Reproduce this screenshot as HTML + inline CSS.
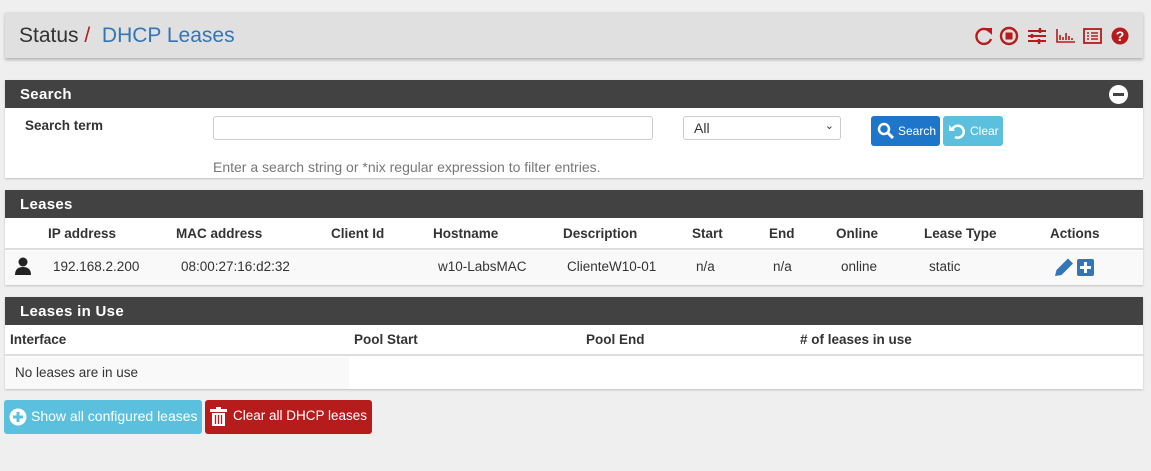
<!DOCTYPE html>
<html><head><style>
*{box-sizing:border-box;margin:0;padding:0}
body{width:1151px;height:471px;background:#efefef;font-family:"Liberation Sans",sans-serif;font-size:13.5px;color:#333;position:relative;overflow:hidden}
.abs{position:absolute}
.hdr{left:5px;top:12px;width:1138px;height:46px;background:#e0e0e0;box-shadow:0 2px 3px rgba(0,0,0,.25)}
.hdr .t{position:absolute;left:14px;top:12px;font-size:21px;color:#333}
.hdr .t span{color:#b71c1c}.hdr .t b{font-weight:normal;color:#3376b7}
.panel{left:5px;width:1138px;background:#fff;box-shadow:0 1px 2px rgba(0,0,0,.2)}
.ph{height:28px;background:#424242;color:#fff;font-weight:bold;font-size:15px;padding:6px 15px;letter-spacing:.3px}
.th{font-weight:bold;position:absolute;font-size:13.5px}
.td{position:absolute;font-size:13.5px}
</style></head><body>
<div class="abs hdr"><div class="t">Status<span> / </span>&nbsp;<b>DHCP Leases</b></div>
<svg class="abs" style="left:967px;top:13px" width="160" height="22" viewBox="0 0 160 22" fill="none" stroke="#b71c1c" stroke-width="2.4">
<path d="M18 7A7.5 7.5 0 1 0 19 14"/><path d="M13 3l7 0 0 7z" fill="#b71c1c" stroke="none"/>
<circle cx="37" cy="11" r="8"/><rect x="33.5" y="7.5" width="7" height="7" fill="#b71c1c" stroke="none"/>
<path d="M56 6h18M56 11h18M56 16h18" stroke-width="2"/><path d="M68 3v5M60 9v4M67 14v5" stroke-width="2.5"/>
<path d="M85 4v13h18M88 15v-5M91 15v-3M94 15v-7M97 15v-4M100 15v-2" stroke-width="1.6"/>
<rect x="112" y="4" width="17" height="14" stroke-width="1.8"/><path d="M115 8h2M119 8h7M115 11h2M119 11h7M115 14h2M119 14h7" stroke-width="1.6"/>
<circle cx="148" cy="11" r="8.5" fill="#b71c1c" stroke="none"/>
<text x="148" y="16" text-anchor="middle" font-family="Liberation Sans" font-weight="bold" font-size="14" fill="#fff" stroke="none">?</text>
</svg>
</div>

<div class="abs panel" style="top:80px;height:98px">
<div class="ph">Search</div>
<div class="abs" style="right:15px;top:5px;width:19px;height:19px;border-radius:50%;background:#fff"><div class="abs" style="left:4px;top:8px;width:11px;height:3px;background:#424242"></div></div>
<div class="th" style="left:20px;top:38px">Search term</div>
<div class="abs" style="left:208px;top:36px;width:440px;height:24px;border:1px solid #ccc;border-radius:3px"></div>
<div class="abs" style="left:678px;top:36px;width:158px;height:24px;border:1px solid #ccc;border-radius:3px;padding:3px 10px;font-size:14px">All<span class="abs" style="right:6px;top:2px;font-size:11px">&#8964;</span></div>
<div class="abs" style="left:866px;top:36px;width:69px;height:30px;background:#1e76ca;border-radius:3px;color:#fff;font-size:12px;padding:8px 0 0 27px">Search</div>
<svg class="abs" style="left:872px;top:42px" width="18" height="18"><circle cx="7" cy="7" r="5" fill="none" stroke="#fff" stroke-width="2.5"/><path d="M11 11l5 5" stroke="#fff" stroke-width="3"/></svg>
<div class="abs" style="left:938px;top:36px;width:60px;height:30px;background:#5bc0de;border-radius:3px;color:#fff;font-size:12px;padding:8px 0 0 27px">Clear</div>
<svg class="abs" style="left:943px;top:42px" width="18" height="18"><path d="M4 8A6 6 0 1 1 7 15" fill="none" stroke="#fff" stroke-width="2.5"/><path d="M1 3v6h6z" fill="#fff"/></svg>
<div class="td" style="left:208px;top:79px;color:#777;font-size:14px">Enter a search string or *nix regular expression to filter entries.</div>
</div>

<div class="abs panel" style="top:190px;height:95px">
<div class="ph">Leases</div>
<div class="abs" style="left:0;top:28px;width:1138px;height:32px;border-bottom:2px solid #ddd"></div>
<div class="th" style="left:43px;top:36px">IP address</div><div class="th" style="left:171px;top:36px">MAC address</div>
<div class="th" style="left:326px;top:36px">Client Id</div><div class="th" style="left:428px;top:36px">Hostname</div>
<div class="th" style="left:558px;top:36px">Description</div><div class="th" style="left:687px;top:36px">Start</div>
<div class="th" style="left:764px;top:36px">End</div><div class="th" style="left:831px;top:36px">Online</div>
<div class="th" style="left:919px;top:36px">Lease Type</div><div class="th" style="left:1045px;top:36px">Actions</div>
<div class="abs" style="left:0;top:61px;width:1138px;height:34px;background:#f9f9f9"></div>
<svg class="abs" style="left:10px;top:67px" width="18" height="20"><circle cx="8" cy="5" r="4.5" fill="#222"/><path d="M0 18q0-8 8-8t8 8z" fill="#222"/></svg>
<div class="td" style="left:48px;top:69px">192.168.2.200</div><div class="td" style="left:176px;top:69px">08:00:27:16:d2:32</div>
<div class="td" style="left:433px;top:69px">w10-LabsMAC</div><div class="td" style="left:562px;top:69px">ClienteW10-01</div>
<div class="td" style="left:691px;top:69px">n/a</div><div class="td" style="left:768px;top:69px">n/a</div>
<div class="td" style="left:836px;top:69px">online</div><div class="td" style="left:924px;top:69px">static</div>
<svg class="abs" style="left:1049px;top:66px" width="42" height="22"><path d="M1 20l1.5-6L14 2.5l5 5L7.5 19z" fill="#3376b7"/><rect x="23" y="3" width="17" height="17" rx="2" fill="#3376b7"/><path d="M31.5 6v11M26 11.5h11" stroke="#fff" stroke-width="3"/></svg>
</div>

<div class="abs panel" style="top:297px;height:92px">
<div class="ph">Leases in Use</div>
<div class="abs" style="left:0;top:27px;width:1138px;height:32px;border-bottom:2px solid #ddd"></div>
<div class="th" style="left:5px;top:35px">Interface</div><div class="th" style="left:349px;top:35px">Pool Start</div>
<div class="th" style="left:581px;top:35px">Pool End</div><div class="th" style="left:795px;top:35px"># of leases in use</div>
<div class="abs" style="left:0;top:60px;width:344px;height:32px;background:#f9f9f9"></div>
<div class="td" style="left:10px;top:68px">No leases are in use</div>
</div>

<div class="abs" style="left:4px;top:400px;width:198px;height:34px;background:#5bc0de;border-radius:3px;color:#fff;font-size:14px;padding:8px 0 0 27px">Show all configured leases</div>
<svg class="abs" style="left:9px;top:408px" width="18" height="18"><circle cx="9" cy="9" r="8.5" fill="#fff"/><path d="M9 4v10M4 9h10" stroke="#5bc0de" stroke-width="3"/></svg>
<div class="abs" style="left:205px;top:400px;width:167px;height:34px;background:#b71c1c;border-radius:3px;color:#fff;font-size:13.5px;padding:8px 0 0 28px;white-space:nowrap">Clear all DHCP leases</div>
<svg class="abs" style="left:210px;top:407px" width="18" height="20"><rect x="0" y="2" width="17" height="3" fill="#fff"/><rect x="6" y="0" width="5" height="3" fill="#fff"/><path d="M2 6h13v13H2z" fill="#fff"/><path d="M5.5 8v9M8.5 8v9M11.5 8v9" stroke="#b71c1c" stroke-width="1.3"/></svg>
</body></html>
